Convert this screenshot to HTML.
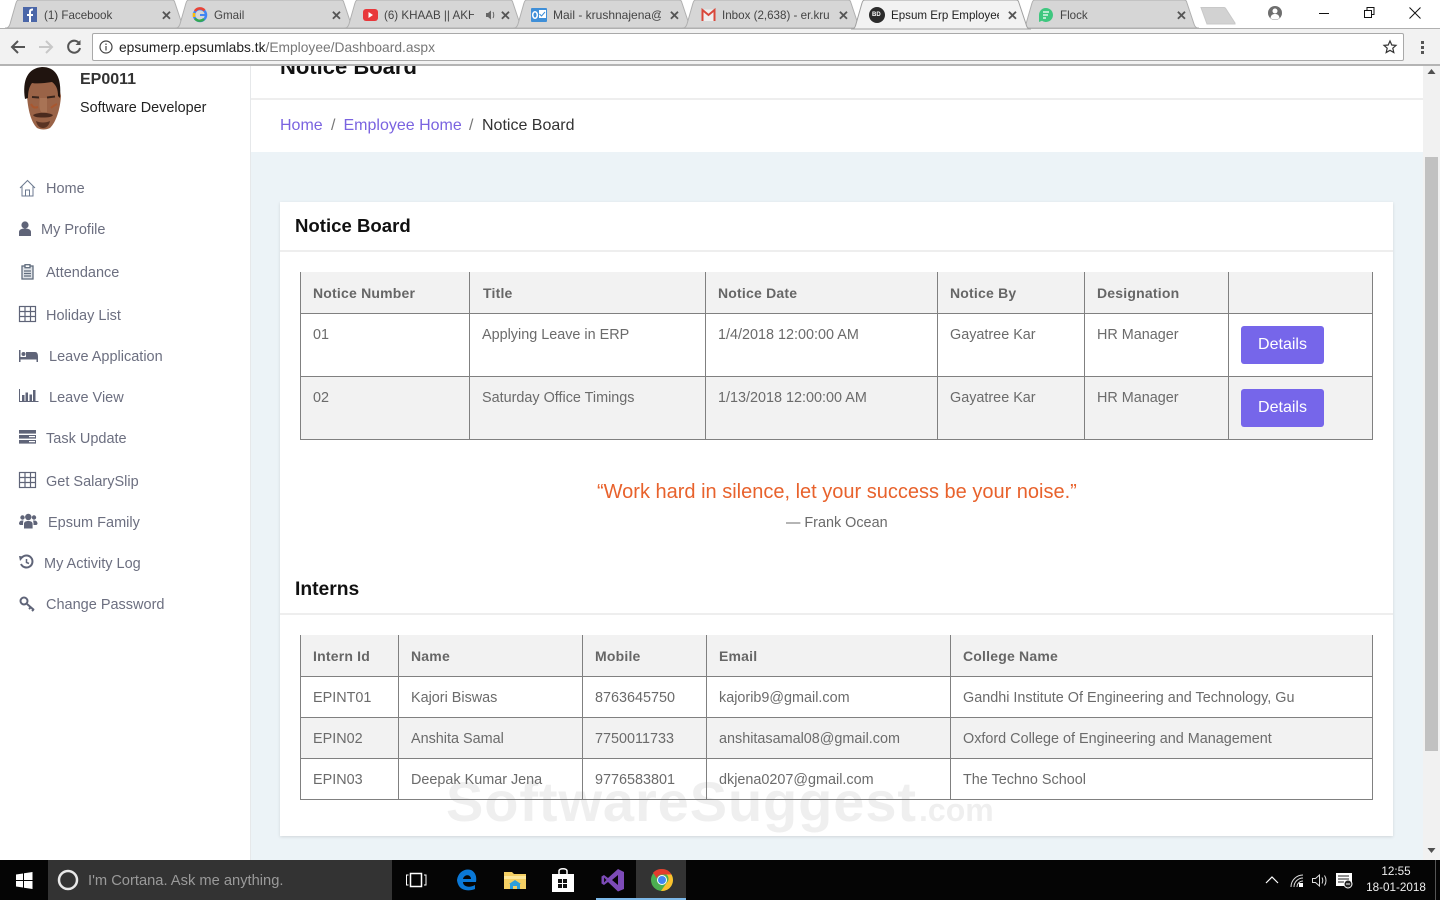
<!DOCTYPE html>
<html><head><meta charset="utf-8"><title>Epsum Erp Employee</title>
<style>
*{box-sizing:border-box}
html,body{margin:0;padding:0;width:1440px;height:900px;overflow:hidden;background:#fff;font-family:"Liberation Sans",sans-serif}
.a{position:absolute;white-space:nowrap}
svg{position:absolute;overflow:visible}
.tt{position:absolute;top:8px;font-size:11.6px;color:#444;white-space:nowrap;overflow:hidden;line-height:15px}
.x{position:absolute;top:7px;font-size:13px;color:#555;font-weight:bold;line-height:17px}
.nav{position:absolute;font-size:14.5px;color:#6c6f80;line-height:18px;white-space:nowrap;margin-top:1px}
.c{position:absolute;font-size:14.4px;color:#6b6b6b;line-height:18px;white-space:nowrap}
.h{position:absolute;font-size:14px;color:#666;font-weight:bold;line-height:18px;white-space:nowrap;letter-spacing:.2px}
.ln{position:absolute;background:#808080}
.btn{position:absolute;left:1241px;width:83px;height:38px;background:#7666ea;border-radius:3px;color:#fff;font-size:16px;text-align:center;line-height:37px}
.ph{position:absolute;font-weight:bold;color:#111;font-size:18.6px;line-height:24px;white-space:nowrap}
</style></head><body>

<!-- page -->
<div class="a" style="left:0;top:66px;width:1423px;height:794px;background:#ecf3f7"></div>
<div class="a" style="left:0;top:66px;width:251px;height:794px;background:#fff;border-right:1px solid #e6e8ea"></div>
<div class="a" style="left:251px;top:66px;width:1172px;height:86px;background:#fff"></div>
<div class="a" style="left:251px;top:98px;width:1172px;height:2px;background:#eee"></div>
<div class="a" style="left:280px;top:53px;font-size:22px;font-weight:bold;color:#111;line-height:28px;height:28px">Notice Board</div>
<div class="a" style="left:280px;top:116px;font-size:16px;line-height:19px;color:#7a63e0">Home</div>
<div class="a" style="left:331px;top:116px;font-size:16px;line-height:19px;color:#777">/</div>
<div class="a" style="left:343.5px;top:116px;font-size:16px;line-height:19px;color:#7a63e0">Employee Home</div>
<div class="a" style="left:469px;top:116px;font-size:16px;line-height:19px;color:#777">/</div>
<div class="a" style="left:482px;top:116px;font-size:16px;line-height:19px;color:#333">Notice Board</div>

<!-- sidebar -->
<svg style="left:22px;top:66px" width="44" height="66" viewBox="0 0 44 66">
<path d="M5 30C6 44 9 56 15 62c4 2 9 2 13 0 6-6 10-18 11-32L36 16H8z" fill="#9a6347"/>
<path d="M18 32c-1 5-1 10 1 14 2 1 4 1 6 0 0-5 0-10 0-14z" fill="#a87355"/>
<path d="M9 38c2 4 4 4 7 3M29 42c2-2 4-3 6-4" stroke="#a9572f" stroke-width="2" fill="none"/>
<path d="M3 33C0 14 6 2 20 1c13 0 20 9 18 31l-2-2c0-7-2-11-6-14-7 1-14 2-20 1-3 4-4 9-4 15z" fill="#20140f"/>
<path d="M10 31l7 .5M25 31.500l8-1" stroke="#3a251c" stroke-width="2"/>
<path d="M11 49c5-3 15-3 20 0-1 2-4 2.500-10 2.500S12 51 11 49z" fill="#4a2a1e"/>
<path d="M14 55c4 2 10 2 14 0-1 5-4 7-7 7s-6-2-7-7z" fill="#5a3424"/>
</svg>
<div class="a" style="left:80px;top:70px;font-size:16px;font-weight:bold;color:#333;line-height:20px">EP0011</div>
<div class="a" style="left:80px;top:99px;font-size:14.400px;color:#222;line-height:18px">Software Developer</div>

<svg style="left:19px;top:179px" width="18" height="18" viewBox="0 0 18 18" fill="none" stroke="#6c7a90"><path d="M1 9L8.500 1.500 16 9M3 7.500V17h11V7.500M6.500 17v-6h4v6"/></svg>
<div class="nav" style="left:46px;top:179px">Home</div>
<svg style="left:19px;top:221px" width="13" height="15" viewBox="0 0 13 15" fill="#5f6478"><circle cx="6" cy="4" r="3.600"/><path d="M0 15V11c0-2 2-3.500 6-3.500s6 1.500 6 3.500v4z"/></svg>
<div class="nav" style="left:41px;top:220px">My Profile</div>
<svg style="left:21px;top:264px" width="14" height="16" viewBox="0 0 14 16" fill="none" stroke="#5f6b7c" stroke-width="1.300"><rect x="1" y="2" width="11" height="13" fill="#dfe3e8"/><rect x="4" y="0.700" width="5" height="3" fill="#fff"/><path d="M3 7h7M3 9.500h7M3 12h7"/></svg>
<div class="nav" style="left:46px;top:263px">Attendance</div>
<svg style="left:19px;top:306px" width="18" height="17" viewBox="0 0 18 17" fill="none" stroke="#5f6478" stroke-width="1.200"><rect x=".5" y=".5" width="16" height="15"/><path d="M6 .5v15M11.500 .5v15M.5 5.500h16M.5 10.500h16"/></svg>
<div class="nav" style="left:46px;top:306px">Holiday List</div>
<svg style="left:19px;top:350px" width="20" height="12" viewBox="0 0 20 12" fill="#5f6478"><path d="M0 0h1.500v7H19V12h-1.500V9.500h-16V12H0z"/><circle cx="4.500" cy="4" r="2"/><path d="M7 2h9c2 0 3 1.500 3 5H7z"/></svg>
<div class="nav" style="left:49px;top:347px">Leave Application</div>
<svg style="left:19px;top:389px" width="20" height="14" viewBox="0 0 20 14" fill="#5f6478"><path d="M0 0h1v12h18.500v1H0z"/><path d="M3 6h2.500v6H3zM6.500 3.500H9V12H6.500zM10.500 5.500H13V12h-2.500zM14 1h2.500v11H14z"/></svg>
<div class="nav" style="left:49px;top:388px">Leave View</div>
<svg style="left:19px;top:430px" width="17" height="14" viewBox="0 0 17 14" fill="#5f6478"><rect width="17" height="3.600"/><rect y="5" width="17" height="3.600"/><rect y="10" width="17" height="3.600"/><rect x="10" y="6" width="6" height="1.200" fill="#fff"/><rect x="10" y="11" width="6" height="1.200" fill="#fff"/></svg>
<div class="nav" style="left:46px;top:429px">Task Update</div>
<svg style="left:19px;top:472px" width="18" height="17" viewBox="0 0 18 17" fill="none" stroke="#5f6478" stroke-width="1.200"><rect x=".5" y=".5" width="16" height="15"/><path d="M6 .5v15M11.500 .5v15M.5 5.500h16M.5 10.500h16"/></svg>
<div class="nav" style="left:46px;top:472px">Get SalarySlip</div>
<svg style="left:19px;top:513px" width="19" height="17" viewBox="0 0 19 17" fill="#5f6478"><circle cx="3.500" cy="4.500" r="2.200"/><circle cx="15" cy="4.500" r="2.200"/><circle cx="9.300" cy="4" r="3.200"/><path d="M0 11c0-2 1-3.500 3-3.500h1.500C4 9 4 10.500 4 12H1zM18.500 11c0-2-1-3.500-3-3.500H14c.5 1.500.5 3 .5 4.500H17.500zM5 15.500V11c0-2 1.500-3 4.300-3s4.300 1 4.300 3v4.500z"/></svg>
<div class="nav" style="left:48px;top:513px">Epsum Family</div>
<svg style="left:19px;top:555px" width="15" height="14" viewBox="0 0 15 14" fill="none" stroke="#5f6478" stroke-width="2"><path d="M3 2.500A6 6 0 1 1 2 9"/><path d="M7.500 4v3.500l2.500 1" stroke-width="1.500"/><path d="M0 1l5 .5L1 6z" fill="#5f6478" stroke="none"/></svg>
<div class="nav" style="left:44px;top:554px">My Activity Log</div>
<svg style="left:19px;top:596px" width="17" height="16" viewBox="0 0 17 16" fill="none" stroke="#5f6478" stroke-width="2"><circle cx="5" cy="5" r="3.500"/><path d="M8 8l7 6M12 11l-2 2M14.500 13.500l-1.500 1.500"/></svg>
<div class="nav" style="left:46px;top:595px">Change Password</div>

<!-- card -->
<div class="a" style="left:280px;top:202px;width:1113px;height:634px;background:#fff;box-shadow:0 1px 3px rgba(0,0,0,.12)"></div>
<div class="a" style="left:280px;top:250px;width:1113px;height:2px;background:#eeeeee"></div>
<div class="ph" style="left:295px;top:214px">Notice Board</div>

<!-- table 1 -->
<div class="a" style="left:300px;top:272px;width:1073px;height:41px;background:#f2f2f2"></div>
<div class="a" style="left:300px;top:376px;width:1073px;height:63px;background:#f2f2f2"></div>
<div class="ln" style="left:300px;top:313px;width:1073px;height:1px"></div>
<div class="ln" style="left:300px;top:376px;width:1073px;height:1px"></div>
<div class="ln" style="left:300px;top:439px;width:1073px;height:1px"></div>
<div class="ln" style="left:300px;top:272px;width:1px;height:168px"></div>
<div class="ln" style="left:469px;top:272px;width:1px;height:168px"></div>
<div class="ln" style="left:705px;top:272px;width:1px;height:168px"></div>
<div class="ln" style="left:937px;top:272px;width:1px;height:168px"></div>
<div class="ln" style="left:1084px;top:272px;width:1px;height:168px"></div>
<div class="ln" style="left:1228px;top:272px;width:1px;height:168px"></div>
<div class="ln" style="left:1372px;top:272px;width:1px;height:168px"></div>
<div class="h" style="left:313px;top:284px">Notice Number</div>
<div class="h" style="left:483px;top:284px">Title</div>
<div class="h" style="left:718px;top:284px">Notice Date</div>
<div class="h" style="left:950px;top:284px">Notice By</div>
<div class="h" style="left:1097px;top:284px">Designation</div>
<div class="c" style="left:313px;top:326px">01</div>
<div class="c" style="left:482px;top:326px">Applying Leave in ERP</div>
<div class="c" style="left:718px;top:326px">1/4/2018 12:00:00 AM</div>
<div class="c" style="left:950px;top:326px">Gayatree Kar</div>
<div class="c" style="left:1097px;top:326px">HR Manager</div>
<div class="btn" style="top:326px">Details</div>
<div class="c" style="left:313px;top:389px">02</div>
<div class="c" style="left:482px;top:389px">Saturday Office Timings</div>
<div class="c" style="left:718px;top:389px">1/13/2018 12:00:00 AM</div>
<div class="c" style="left:950px;top:389px">Gayatree Kar</div>
<div class="c" style="left:1097px;top:389px">HR Manager</div>
<div class="btn" style="top:389px">Details</div>

<div class="a" style="left:597px;top:480px;font-size:20px;line-height:24px;color:#e8622c">“Work hard in silence, let your success be your noise.”</div>
<div class="a" style="left:786px;top:514px;font-size:14.400px;line-height:18px;color:#6b6b6b">— Frank Ocean</div>

<div class="ph" style="left:295px;top:578px;font-size:19.300px">Interns</div>
<div class="a" style="left:280px;top:613px;width:1113px;height:2px;background:#eeeeee"></div>

<!-- table 2 -->
<div class="a" style="left:300px;top:635px;width:1073px;height:41px;background:#f2f2f2"></div>
<div class="a" style="left:300px;top:717px;width:1073px;height:41px;background:#f2f2f2"></div>
<div class="ln" style="left:300px;top:676px;width:1073px;height:1px"></div>
<div class="ln" style="left:300px;top:717px;width:1073px;height:1px"></div>
<div class="ln" style="left:300px;top:758px;width:1073px;height:1px"></div>
<div class="ln" style="left:300px;top:799px;width:1073px;height:1px"></div>
<div class="ln" style="left:300px;top:635px;width:1px;height:165px"></div>
<div class="ln" style="left:398px;top:635px;width:1px;height:165px"></div>
<div class="ln" style="left:582px;top:635px;width:1px;height:165px"></div>
<div class="ln" style="left:706px;top:635px;width:1px;height:165px"></div>
<div class="ln" style="left:950px;top:635px;width:1px;height:165px"></div>
<div class="ln" style="left:1372px;top:635px;width:1px;height:165px"></div>
<div class="h" style="left:313px;top:647px">Intern Id</div>
<div class="h" style="left:411px;top:647px">Name</div>
<div class="h" style="left:595px;top:647px">Mobile</div>
<div class="h" style="left:719px;top:647px">Email</div>
<div class="h" style="left:963px;top:647px">College Name</div>
<div class="c" style="left:313px;top:689px">EPINT01</div>
<div class="c" style="left:411px;top:689px">Kajori Biswas</div>
<div class="c" style="left:595px;top:689px">8763645750</div>
<div class="c" style="left:719px;top:689px">kajorib9@gmail.com</div>
<div class="c" style="left:963px;top:689px">Gandhi Institute Of Engineering and Technology, Gu</div>
<div class="c" style="left:313px;top:730px">EPIN02</div>
<div class="c" style="left:411px;top:730px">Anshita Samal</div>
<div class="c" style="left:595px;top:730px">7750011733</div>
<div class="c" style="left:719px;top:730px">anshitasamal08@gmail.com</div>
<div class="c" style="left:963px;top:730px">Oxford College of Engineering and Management</div>
<div class="c" style="left:313px;top:771px">EPIN03</div>
<div class="c" style="left:411px;top:771px">Deepak Kumar Jena</div>
<div class="c" style="left:595px;top:771px">9776583801</div>
<div class="c" style="left:719px;top:771px">dkjena0207@gmail.com</div>
<div class="c" style="left:963px;top:771px">The Techno School</div>

<!-- watermark -->
<div class="a" style="left:446px;top:770px;font-size:56px;line-height:64px;font-weight:bold;color:rgba(120,120,120,.12);letter-spacing:.9px">SoftwareSuggest</div>
<div class="a" style="left:919px;top:790px;font-size:32px;line-height:40px;font-weight:bold;color:rgba(120,120,120,.12)">.com</div>

<!-- scrollbar -->
<div class="a" style="left:1423px;top:66px;width:17px;height:794px;background:#f1f1f1"></div>
<div class="a" style="left:1425px;top:157px;width:13px;height:594px;background:#c1c1c1"></div>
<svg style="left:1427px;top:69px" width="9" height="6"><path d="M4.500 0L8.500 5H.5z" fill="#505050"/></svg>
<svg style="left:1427px;top:848px" width="9" height="6"><path d="M.5 0h8L4.500 5z" fill="#505050"/></svg>

<!-- chrome -->
<div class="a" style="left:0;top:0;width:1440px;height:29px;background:#fff"></div>
<div class="a" style="left:0;top:28px;width:1440px;height:38px;background:#f2f2f2;border-top:1px solid #b0b0b0;border-bottom:2px solid #b4b4b4"></div>
<svg style="left:0;top:0" width="1240" height="30" viewBox="0 0 1240 30">
<g fill="#d6d6d6" stroke="#b0b0b0">
<path d="M5 28c3 0 4-1 5-4L16 3c.5-2 1.500-3 3-3H172c2 0 2.500 1 3 3l7 21c1 3 2 4 5 4z"/>
<path d="M175 28c3 0 4-1 5-4L186 3c.5-2 1.500-3 3-3H341c2 0 2.500 1 3 3l7 21c1 3 2 4 5 4z"/>
<path d="M344 28c3 0 4-1 5-4L355 3c.5-2 1.500-3 3-3H510c2 0 2.500 1 3 3l7 21c1 3 2 4 5 4z"/>
<path d="M513 28c3 0 4-1 5-4L524 3c.5-2 1.500-3 3-3H679c2 0 2.500 1 3 3l7 21c1 3 2 4 5 4z"/>
<path d="M682 28c3 0 4-1 5-4L693 3c.5-2 1.500-3 3-3H848c2 0 2.500 1 3 3l7 21c1 3 2 4 5 4z"/>
<path d="M1021 28c3 0 4-1 5-4L1032 3c.5-2 1.500-3 3-3H1184c2 0 2.500 1 3 3l7 21c1 3 2 4 5 4z"/>
<path d="M851 29c3 0 4-1 5-5L862 3c.5-2 1.500-3 3-3H1016c2 0 2.500 1 3 3l7 21c1 4 2 5 5 5z" fill="#f2f2f2" stroke="#a0a0a0"/>
<path d="M1201 7.500h23c1 0 1.500 .5 2 1.500l9 14v1h-28z" fill="#d2d2d2" stroke="#c8c8c8"/>
</g>
<rect x="23" y="7" width="14" height="15" fill="#4a66a8"/><path d="M31 22v-6h2v-2h-2v-2c0-1 .5-1.500 2-1.500V8.500c-3 0-4 1-4 3.500v2h-2v2h2v6z" fill="#fff"/>
<circle cx="200" cy="15" r="6" fill="none" stroke="#4285f4" stroke-width="2.500"/><path d="M195 11a6 6 0 0 1 9.500-.5" fill="none" stroke="#ea4335" stroke-width="2.500"/><path d="M195 18.500a6 6 0 0 0 9 .5" fill="none" stroke="#34a853" stroke-width="2.500"/><path d="M194 13v4" stroke="#fbbc05" stroke-width="2.500"/><rect x="200" y="14" width="6" height="2" fill="#4285f4"/>
<rect x="363" y="9" width="15" height="12" rx="3" fill="#e8383b"/><path d="M368.500 12v6l4.500-3z" fill="#fff"/>
<rect x="531" y="8" width="16" height="14" rx="1" fill="#3f8fd8"/><rect x="539" y="10" width="7" height="8" fill="#fff"/><path d="M539.500 14l2 2 3.500-4" stroke="#3f8fd8" fill="none"/><ellipse cx="535" cy="15" rx="2.300" ry="3.200" fill="none" stroke="#fff" stroke-width="1.500"/>
<path d="M702 9.500h13V21h-13z" fill="#efefef"/><path d="M702.500 21V10l6 5 6-5v11" fill="none" stroke="#d9483b" stroke-width="2"/>
<circle cx="877" cy="15" r="8" fill="#2b2b2b"/>
<path d="M1039 15a7 7 0 1 1 3 5.700L1039 22z" fill="#3fc77f"/><path d="M1043 12h6M1043 15h5M1043 18h3" stroke="#fff" stroke-width="1.300"/>
<path d="M486 13h2l3-2.500v9L488 17h-2z" fill="#666"/><path d="M493 12c1 1.500 1 4.500 0 6" stroke="#666" fill="none"/>
</svg>
<div class="tt" style="left:44px;width:100px">(1) Facebook</div><div class="x" style="left:161px">✕</div>
<div class="tt" style="left:214px;width:100px">Gmail</div><div class="x" style="left:331px">✕</div>
<div class="tt" style="left:384px;width:90px">(6) KHAAB || AKHIL</div><div class="x" style="left:500px">✕</div>
<div class="tt" style="left:553px;width:108px;font-size:12px">Mail - krushnajena@gmail</div><div class="x" style="left:669px">✕</div>
<div class="tt" style="left:722px;width:108px">Inbox (2,638) - er.krushna</div><div class="x" style="left:838px">✕</div>
<div class="tt" style="left:891px;width:108px;color:#222">Epsum Erp Employee</div><div class="x" style="left:1007px">✕</div>
<div class="tt" style="left:1060px;width:100px">Flock</div><div class="x" style="left:1176px">✕</div>
<div class="a" style="left:872px;top:11px;font-size:6px;line-height:8px;font-weight:bold;color:#fff">BD</div>

<svg style="left:1268px;top:6px" width="14" height="14" viewBox="0 0 14 14"><circle cx="7" cy="7" r="7" fill="#6e6e6e"/><circle cx="7" cy="5" r="2.500" fill="#fff"/><path d="M2.500 12c.5-3 2-4 4.500-4s4 1 4.500 4a7 7 0 0 1-9 0z" fill="#fff"/></svg>
<svg style="left:1319px;top:8px" width="12" height="12"><path d="M0 5.500h10" stroke="#111"/></svg>
<svg style="left:1364px;top:7px" width="12" height="12" fill="none" stroke="#111"><path d="M.5 3.500h7v7h-7zM3 3.500V.5h7v7H7.500"/></svg>
<svg style="left:1409px;top:7px" width="12" height="12" fill="none" stroke="#111"><path d="M.5 .5l11 11M11.500 .5l-11 11"/></svg>

<svg style="left:10px;top:39px" width="16" height="16" fill="none" stroke="#555" stroke-width="2"><path d="M15 8H2M8 2L2 8l6 6"/></svg>
<svg style="left:38px;top:39px" width="16" height="16" fill="none" stroke="#c8c8c8" stroke-width="2"><path d="M1 8h13M8 2l6 6-6 6"/></svg>
<svg style="left:66px;top:39px" width="16" height="16" fill="none" stroke="#555" stroke-width="2"><path d="M13.500 5A6 6 0 1 0 14 9"/><path d="M14.500 1v5h-5" fill="#555" stroke="none"/></svg>
<div class="a" style="left:92px;top:33px;width:1312px;height:28px;background:#fff;border:1px solid #a9a9a9;border-radius:2px"></div>
<svg style="left:99px;top:40px" width="14" height="14" fill="none" stroke="#444" stroke-width="1.200"><circle cx="7" cy="7" r="6"/><path d="M7 6v4.500M7 3.500v1.500"/></svg>
<div class="a" style="left:119px;top:40px;font-size:13.800px;line-height:16px;color:#222">epsumerp.epsumlabs.tk<span style="color:#777">/Employee/Dashboard.aspx</span></div>
<svg style="left:1383px;top:40px" width="14" height="14" viewBox="0 0 14 14" fill="none" stroke="#333" stroke-width="1.200"><path d="M7 1l1.800 4 4.200.4-3.200 2.800 1 4.300L7 10.300 3.200 12.500l1-4.300L1 5.400 5.200 5z"/></svg>
<svg style="left:1421px;top:41px" width="4" height="13" fill="#555"><rect x="0" y="0" width="3" height="3"/><rect x="0" y="5" width="3" height="3"/><rect x="0" y="10" width="3" height="3"/></svg>

<!-- taskbar -->
<div class="a" style="left:0;top:860px;width:1440px;height:40px;background:#050505"></div>
<div class="a" style="left:48px;top:860px;width:344px;height:40px;background:#333"></div>
<div class="a" style="left:636px;top:860px;width:50px;height:40px;background:#333"></div>
<div class="a" style="left:596px;top:898px;width:40px;height:2px;background:#7cb8e8"></div>
<div class="a" style="left:636px;top:898px;width:50px;height:2px;background:#7cb8e8"></div>
<svg style="left:16px;top:872px" width="17" height="17" fill="#fff"><path d="M0 2.500L7 1.500v6.500H0zM8 1.300L16.500 0v8H8zM0 9h7v6.500L0 14.500zM8 9h8.500v8L8 15.700z"/></svg>
<svg style="left:57px;top:869px" width="22" height="22" fill="none" stroke="#e8e8e8" stroke-width="2.500"><circle cx="11" cy="11" r="9"/></svg>
<div class="a" style="left:88px;top:872px;font-size:14.700px;line-height:19px;color:#9a9a9a">I'm Cortana. Ask me anything.</div>
<svg style="left:406px;top:873px" width="21" height="15" fill="none" stroke="#fff"><rect x="4.500" y=".5" width="11" height="13" stroke-width="1.500"/><path d="M2.500 2H.5v10h2M18 2h2v10h-2"/></svg>
<svg style="left:456px;top:869px" width="21" height="22" viewBox="0 0 21 22"><path d="M1 11C2 3 9-1 15 1c4 2 6 6 5 12H7c0 5 7 6 12 3v4c-7 3-15 1-17-5-.5-1-1-3-1-4zm6-1h8c0-5-7-5-8 0z" fill="#0a78d7"/></svg>
<svg style="left:504px;top:871px" width="22" height="19"><path d="M0 1h8l2 2h12v15H0z" fill="#f4cf63"/><rect x="0" y="5" width="22" height="3" fill="#fde79a"/><path d="M6 18v-5l-1 0 6-4 6 4h-1v5h-3v-3H9v3z" fill="#2d9fdc"/></svg>
<svg style="left:552px;top:868px" width="22" height="24"><path d="M0 6h22v18H0z" fill="#fff"/><path d="M7 7V3c0-3 8-3 8 0v4" fill="none" stroke="#fff" stroke-width="1.500"/><path d="M6 11h4v4H6zM11 11h4v4h-4zM6 16h4v4H6zM11 16h4v4h-4z" fill="#111"/></svg>
<svg style="left:601px;top:868px" width="24" height="24" viewBox="0 0 24 24"><path d="M17 1l6 3v17l-6 2.500L7 14l-4 3-2.500-1.500v-7L3 7l4 3zM17 7l-6 5 6 5z" fill="#7d4bb8"/><path d="M3 9.500v5l2.500-2.500z" fill="#111"/></svg>
<svg style="left:651px;top:869px" width="22" height="22" viewBox="0 0 22 22"><circle cx="11" cy="11" r="11" fill="#4caf50"/><path d="M11 0a11 11 0 0 1 9.500 5.500H11a5.500 5.500 0 0 0-5.200 3.700L2 3.800A11 11 0 0 1 11 0z" fill="#e33b2e"/><path d="M20.500 5.500A11 11 0 0 1 10 22l5.500-8a5.500 5.500 0 0 0 0-8.500z" fill="#fbc02d"/><circle cx="11" cy="11" r="5" fill="#fff"/><circle cx="11" cy="11" r="4" fill="#4285f4"/></svg>
<svg style="left:1265px;top:875px" width="14" height="9" fill="none" stroke="#fff" stroke-width="1.200"><path d="M1 8l6-6 6 6"/></svg>
<svg style="left:1290px;top:874px" width="14" height="14" fill="none" stroke="#ddd"><path d="M1 13A12 12 0 0 1 13 1M4 13a9 9 0 0 1 9-9M7 13a6 6 0 0 1 6-6"/><rect x="9" y="9" width="4" height="4" fill="#fff" stroke="none"/></svg>
<svg style="left:1312px;top:874px" width="16" height="13" fill="none" stroke="#ddd"><path d="M.5 4.500h3L7.500 1v11l-4-3.500h-3z"/><path d="M10 3.500c1 2 1 4 0 6M12.500 1.500c2 3 2 7 0 10"/></svg>
<svg style="left:1336px;top:873px" width="18" height="16"><rect width="16" height="13" fill="#fff"/><path d="M2 3h11M2 6h11M2 9h6" stroke="#222"/><circle cx="12" cy="11" r="4" fill="#222" stroke="#fff"/><path d="M10 11h4" stroke="#fff"/></svg>
<div class="a" style="left:1360px;top:864px;width:72px;text-align:center;font-size:11.700px;line-height:16px;color:#eee">12:55<br>18-01-2018</div>
<div class="a" style="left:1435px;top:860px;width:1px;height:40px;background:#555"></div>
</body></html>
